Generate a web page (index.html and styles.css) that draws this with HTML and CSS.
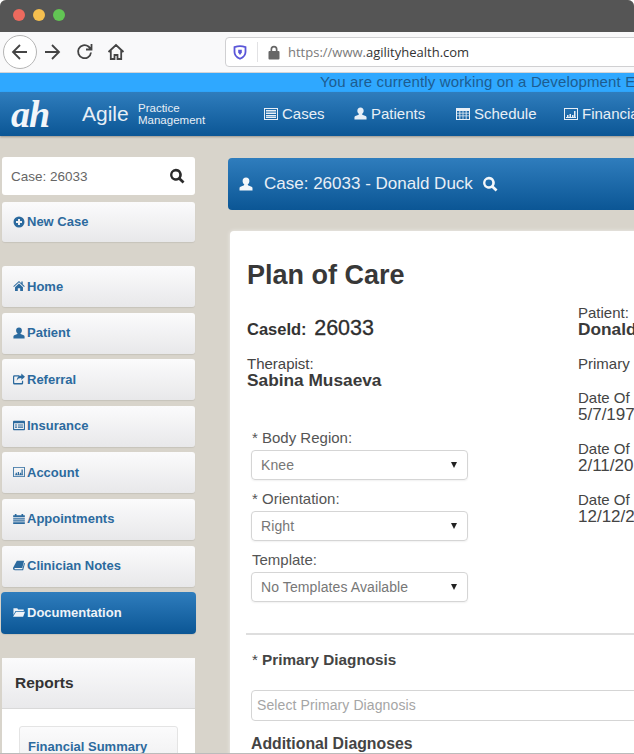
FILE: index.html
```html
<!DOCTYPE html>
<html lang="en">
<head>
    <meta charset="UTF-8">
    <title>Plan of Care</title>
    <link rel="stylesheet" href="styles.css">
</head>
<body>
<svg class="defs" width="0" height="0">
    <symbol id="i-user" viewBox="0 0 14 14"><path d="M7 .6c-2.200 0-3.400 1.500-3.400 3.500 0 1.400.6 2.600 1.600 3.200L5.100 8.300 1.500 9.700C.9 10 .5 10.500.5 11.100V13.400h13v-2.300c0-.6-.4-1.100-1-1.400L8.900 8.300 8.800 7.300c1-.6 1.600-1.800 1.600-3.200C10.400 2.100 9.200.6 7 .6z"/></symbol>
    <symbol id="i-search" viewBox="0 0 16 16"><path fill-rule="evenodd" d="M6.800 .8a6 6 0 0 1 5 9.300l3.700 3.300-1.900 2.100-3.700-3.400A6 6 0 1 1 6.800 .8zm0 2.600a3.400 3.400 0 1 0 0 6.800 3.400 3.400 0 0 0 0-6.800z"/></symbol>
    <symbol id="i-list" viewBox="0 0 14 12"><path fill-rule="evenodd" d="M0 0h14v12H0zm1 1v10h12V1zm1 1h10v1.500H2zm0 2.500h10V6H2zM2 7h10v1.500H2zm0 2h10v1H2z"/></symbol>
    <symbol id="i-calendar" viewBox="0 0 14 12"><path fill-rule="evenodd" d="M0 0h14v12H0zm1 3v1.800h2.400V3zm3.300 0v1.800h2.300V3zm3.100 0v1.800h2.300V3zm3.200 0v1.800H13V3zM1 5.600v1.900h2.400V5.600zm3.300 0v1.900h2.300V5.600zm3.100 0v1.900h2.300V5.600zm3.200 0v1.900H13V5.600zM1 8.300V11h2.400V8.300zm3.300 0V11h2.300V8.300zm3.100 0V11h2.300V8.300zm3.200 0V11H13V8.300z"/></symbol>
    <symbol id="i-chart" viewBox="0 0 14 12"><path fill-rule="evenodd" d="M0 0h14v12H0zm1 1v10h12V1zm1 8h10v1H2zm1-2h1.500v2H3zm2.500-1H7v3H5.500zM8 7h1.500v2H8zm2-4h1.500v6H10z"/></symbol>
    <symbol id="i-plus" viewBox="0 0 12 12"><path fill-rule="evenodd" d="M6 .5a5.500 5.500 0 1 1 0 11 5.500 5.500 0 0 1 0-11zM5 3v2H3v2h2v2h2V7h2V5H7V3z"/></symbol>
    <symbol id="i-home" viewBox="0 0 13 12"><path d="M6.500 .5.300 6.200l.7.800 5.500-5 5.500 5 .7-.8-2.200-2V1.200H9v1.700zM2.200 7.300V11.500h3V8.500h2.600v3h3V7.300L6.500 3.400z"/></symbol>
    <symbol id="i-share" viewBox="0 0 13 12"><path d="M1.500 2H7v1.300H1.800a.5.500 0 0 0-.5.500v6a.5.500 0 0 0 .5.500h7.400a.5.500 0 0 0 .5-.5V8H11v2.500A1.500 1.500 0 0 1 9.500 12h-8A1.500 1.500 0 0 1 0 10.500v-7A1.500 1.500 0 0 1 1.500 2zM9 0l4 3.500L9 7V5C6.800 5 5 5.800 4 8c0-3.200 2-5.500 5-5.700z"/></symbol>
    <symbol id="i-card" viewBox="0 0 14 12"><path fill-rule="evenodd" d="M1 .5h12a1 1 0 0 1 1 1v9a1 1 0 0 1-1 1H1a1 1 0 0 1-1-1v-9a1 1 0 0 1 1-1zm.3 3v6.700h11.400V3.500zM2.300 4.800h2.400V6H2.300zm3.400 0h6V6h-6zM2.300 7.300h2.400v1.200H2.300zm3.400 0h6v1.200h-6z"/></symbol>
    <symbol id="i-appt" viewBox="0 0 14 12"><path d="M2 0h2v1.500h6V0h2v1.500h2V4H0V1.500h2zM0 5h14v1.500H0zm0 2.500h14V9H0zM0 10h14v2H0z"/></symbol>
    <symbol id="i-book" viewBox="0 0 14 12"><path d="M4.500 .5H13L10.800 9H2.500c-.6 0-.9.300-.9.700s.3.800.9.800h8.300L13 3l1 .5-2.200 8H2.200C1 11.500 0 10.700 0 9.500c0-.3 0-.6.100-.9z"/></symbol>
    <symbol id="i-folder" viewBox="0 0 14 12"><path d="M.5 1H5l1 1.500h6.500v1.700H3L.5 9zM3.600 5H14l-2.200 6H0z"/></symbol>
</svg>

<div class="frame">
    <div class="titlebar">
        <span class="dot dot-red"></span>
        <span class="dot dot-yellow"></span>
        <span class="dot dot-green"></span>
    </div>

    <div class="toolbar">
        <span class="back-btn">
            <svg width="20" height="20" viewBox="0 0 20 20" class="tool-icon"><path d="M17 10H3M10 3l-7 7 7 7"/></svg>
        </span>
        <svg width="20" height="20" viewBox="0 0 20 20" class="tool-icon forward"><path d="M3 10h14M10 3l7 7-7 7"/></svg>
        <svg width="20" height="20" viewBox="0 0 20 20" class="tool-icon reload"><path d="M16 10.500A6.500 6.500 0 1 1 13.500 4.500L16 7M16.500 2v5.500H11"/></svg>
        <svg width="20" height="20" viewBox="0 0 20 20" class="tool-icon home"><path d="M2.500 10 10 3l7.500 7M4.800 8.500V17h3.700v-4h3v4h3.700V8.500"/></svg>
        <div class="urlbar">
            <svg class="shield" width="14" height="15" viewBox="0 0 14 15"><path d="M1.500 2.200C3.500 1.500 5 1.200 7 1.200s3.500.3 5.500 1V7c0 3.200-2.300 5.400-5.500 6.800C3.800 12.400 1.500 10.200 1.500 7z"/><path class="shield-in" d="M5.200 4.800h3.600v2.600L7 10 5.200 7.400z"/></svg>
            <span class="url-sep"></span>
            <svg class="lock" width="12" height="15" viewBox="0 0 12 15"><path d="M2.500 6V4.200a3.500 3.500 0 0 1 7 0V6h1a1 1 0 0 1 1 1v6.500a1 1 0 0 1-1 1h-9a1 1 0 0 1-1-1V7a1 1 0 0 1 1-1zm1.700 0h3.600V4.200a1.800 1.800 0 0 0-3.600 0z"/></svg>
            <span class="url"><span class="url-dim">https://www.</span>agilityhealth.com</span>
        </div>
    </div>

    <div class="dev-banner">You are currently working on a Development Environment</div>

    <nav class="topnav">
        <span class="logo">ah</span>
        <span class="brand">Agile</span>
        <span class="brand-sub">Practice<br>Management</span>
        <a class="nav-item nav-cases"><svg width="14" height="12"><use href="#i-list"/></svg>Cases</a>
        <a class="nav-item nav-patients"><svg width="13" height="13"><use href="#i-user"/></svg>Patients</a>
        <a class="nav-item nav-schedule"><svg width="14" height="12"><use href="#i-calendar"/></svg>Schedule</a>
        <a class="nav-item"><svg width="14" height="12"><use href="#i-chart"/></svg>Financial</a>
    </nav>

    <div class="layout">
        <aside class="sidebar">
            <div class="case-search">
                <span>Case: 26033</span>
                <svg width="16" height="16"><use href="#i-search"/></svg>
            </div>
            <a class="side-btn new-case"><svg width="12" height="12"><use href="#i-plus"/></svg>New Case</a>

            <div class="side-group">
                <a class="side-btn"><svg width="12" height="12"><use href="#i-home"/></svg>Home</a>
                <a class="side-btn"><svg width="12" height="12"><use href="#i-user"/></svg>Patient</a>
                <a class="side-btn"><svg width="12" height="12"><use href="#i-share"/></svg>Referral</a>
                <a class="side-btn"><svg width="12" height="11"><use href="#i-card"/></svg>Insurance</a>
                <a class="side-btn"><svg width="12" height="10"><use href="#i-chart"/></svg>Account</a>
                <a class="side-btn"><svg width="12" height="10"><use href="#i-appt"/></svg>Appointments</a>
                <a class="side-btn"><svg width="12" height="11"><use href="#i-book"/></svg>Clinician Notes</a>
                <a class="side-btn active"><svg width="12" height="11"><use href="#i-folder"/></svg>Documentation</a>
            </div>

            <div class="reports">
                <div class="reports-title">Reports</div>
                <div class="reports-body">
                    <a class="report-link">Financial Summary</a>
                </div>
            </div>
        </aside>

        <main class="main">
            <header class="case-header">
                <svg width="14" height="14"><use href="#i-user"/></svg>
                <span>Case: 26033 - Donald Duck</span>
                <svg class="case-search-ic" width="16" height="16"><use href="#i-search"/></svg>
            </header>

            <section class="card">
                <h1>Plan of Care</h1>
                <div class="columns">
                    <div class="col-left">
                        <div class="case-id"><b>CaseId:</b> <span>26033</span></div>
                        <div class="field therapist">Therapist:<br><b>Sabina Musaeva</b></div>

                        <label class="select-label">* Body Region:</label>
                        <div class="select"><span>Knee</span><i class="caret"></i></div>
                        <label class="select-label">* Orientation:</label>
                        <div class="select"><span>Right</span><i class="caret"></i></div>
                        <label class="select-label">Template:</label>
                        <div class="select"><span>No Templates Available</span><i class="caret"></i></div>
                    </div>
                    <div class="col-right">
                        <div class="field">Patient:<br><b>Donald Duck</b></div>
                        <div class="field">Primary Insurance:</div>
                        <div class="field">Date Of Birth:<br><span class="date">5/7/1975</span></div>
                        <div class="field">Date Of Injury:<br><span class="date">2/11/2019</span></div>
                        <div class="field">Date Of Surgery:<br><span class="date">12/12/2019</span></div>
                    </div>
                </div>

                <hr class="divider">

                <div class="diag-title">* <b>Primary Diagnosis</b></div>
                <div class="diag-input">Select Primary Diagnosis</div>
                <div class="diag-extra">Additional Diagnoses</div>
            </section>
        </main>
    </div>
</div>
</body>
</html>
```

FILE: styles.css
```css
html, body {
  margin: 0;
  height: 100%;
  overflow: hidden;
}
body {
  font-family: "Liberation Sans", Arial, sans-serif;
  background: #fff;
}
.defs {
  position: absolute;
}
a {
  text-decoration: none;
}

.frame {
  width: 634px;
  height: 753px;
  overflow: hidden;
  background: #d8d4cb;
  border-bottom: 1px solid #bbb;
  border-radius: 6px 6px 0 0;
}

/* browser window */
.titlebar {
  height: 30px;
  padding: 0 0 2px 13px;
  background: #555555;
  display: flex;
  align-items: center;
  gap: 8px;
}
.dot {
  width: 12px;
  height: 12px;
  border-radius: 50%;
}
.dot-red { background: #ed6a5e; }
.dot-yellow { background: #f5bf4f; }
.dot-green { background: #62c554; }

.toolbar {
  height: 40px;
  background: #f9f9fa;
  border-bottom: 1px solid #d4d4d6;
  display: flex;
  align-items: center;
  padding-left: 3px;
}
.back-btn {
  width: 32px;
  height: 32px;
  border: 1px solid #b5b5b5;
  border-radius: 50%;
  background: #fff;
  display: flex;
  align-items: center;
  justify-content: center;
  flex-shrink: 0;
}
.tool-icon {
  fill: none;
  stroke: #444;
  stroke-width: 1.800;
  flex-shrink: 0;
}
.forward { margin-left: 5px; }
.reload { margin-left: 13px; }
.home { margin-left: 11px; }
.urlbar {
  margin-left: 99px;
  width: 420px;
  height: 28px;
  flex-shrink: 0;
  background: #fff;
  border: 1px solid #d0d0d2;
  border-radius: 4px;
  display: flex;
  align-items: center;
  padding-left: 7px;
  font-family: "Open Sans", sans-serif;
  font-size: 13px;
  color: #333;
}
.shield {
  fill: #fff;
  stroke: #5a56d8;
  stroke-width: 1.800;
}
.shield-in {
  fill: #5a56d8;
  stroke: none;
}
.url-sep {
  width: 1px;
  height: 20px;
  background: #e2e2e4;
  margin: 0 10px 0 10px;
}
.lock {
  fill: #666;
  margin-right: 8px;
}
.url-dim {
  color: #7a7a7a;
}

.dev-banner {
  height: 19px;
  line-height: 18px;
  background: #2fa8ff;
  color: #1d5c90;
  font-size: 15px;
  letter-spacing: 0.15px;
  padding-left: 320px;
  white-space: nowrap;
}

.topnav {
  height: 44px;
  padding-bottom: 1px;
  box-sizing: border-box;
  background: linear-gradient(#2f7dbd, #0b5695);
  box-shadow: 0 1px 2px rgba(0, 0, 0, 0.3);
  color: #e8eff6;
  display: flex;
  align-items: center;
  white-space: nowrap;
}
.topnav > * {
  flex-shrink: 0;
}
.logo {
  font-family: "Liberation Serif", serif;
  font-style: italic;
  font-weight: bold;
  font-size: 38px;
  line-height: 30px;
  letter-spacing: -1px;
  color: #f2f6fa;
  margin-left: 11px;
  width: 71px;
}
.brand {
  font-size: 21px;
  width: 56px;
}
.brand-sub {
  font-size: 11.500px;
  line-height: 12px;
  width: 70px;
}
.nav-item {
  display: flex;
  align-items: center;
  gap: 4px;
  font-size: 15px;
  color: #e8eff6;
}
.nav-item svg {
  fill: #e8eff6;
}
.nav-cases { margin-left: 56px; width: 90px; }
.nav-patients { width: 102px; }
.nav-schedule { width: 108px; }

/* page */
.layout {
  display: flex;
  align-items: flex-start;
  padding: 21px 0 0 2px;
}
.sidebar {
  width: 193px;
  flex-shrink: 0;
}
.case-search {
  height: 38px;
  background: #fff;
  border-radius: 3px;
  display: flex;
  align-items: center;
  justify-content: space-between;
  padding: 0 10px 0 9px;
  font-size: 13.500px;
  color: #666;
}
.case-search svg {
  fill: #2b2b2b;
}
.side-btn {
  display: flex;
  align-items: center;
  gap: 2px;
  height: 41px;
  padding: 0 0 1px 11px;
  box-sizing: border-box;
  background: linear-gradient(#fbfbfc, #e8e8ea);
  border-radius: 3px;
  box-shadow: 0 1px 1px rgba(0, 0, 0, 0.08);
  font-size: 13px;
  font-weight: bold;
  color: #2c6a9e;
}
.side-btn svg {
  fill: #2c6a9e;
  flex-shrink: 0;
}
.new-case {
  height: 40px;
  margin-top: 7px;
}
.side-group {
  margin-top: 24px;
}
.side-group .side-btn {
  margin-top: 5.600px;
}
.side-group .side-btn:first-child {
  margin-top: 0;
}
.side-btn.active {
  background: linear-gradient(#2f7dbd, #0b5695);
  color: #eef3f8;
  margin-left: -1px;
  width: 195px;
  height: 42px;
  padding-left: 12px;
  padding-bottom: 2px;
  border-radius: 4px;
}
.side-btn.active svg {
  fill: #eef3f8;
}
.reports {
  margin-top: 24px;
  background: #fff;
  border-radius: 3px 3px 0 0;
}
.reports-title {
  height: 50px;
  line-height: 50px;
  padding-left: 13px;
  background: linear-gradient(#fbfbfc, #e9e9eb);
  border-bottom: 1px solid #d9d9d9;
  font-size: 15.500px;
  font-weight: bold;
  color: #333;
}
.reports-body {
  padding: 17px 17px 10px;
}
.report-link {
  display: block;
  height: 40px;
  line-height: 40px;
  padding-left: 8px;
  background: linear-gradient(#fbfbfc, #efeff0);
  border: 1px solid #e4e4e4;
  border-radius: 3px;
  font-size: 13px;
  font-weight: bold;
  color: #2c6a9e;
}

.main {
  margin: 1px 0 0 33px;
  width: 500px;
  flex-shrink: 0;
}
.case-header {
  height: 52px;
  background: linear-gradient(#2f7dbd, #0b5695);
  border-radius: 4px;
  color: #e8eff6;
  display: flex;
  align-items: center;
  padding-left: 11px;
  box-sizing: border-box;
  font-size: 17px;
  white-space: nowrap;
}
.case-header svg {
  fill: #f4f7fa;
}
.case-header span {
  margin-left: 11px;
}
.case-search-ic {
  margin-left: 9px;
}
.card {
  margin: 21px 0 0 2px;
  background: #fff;
  border-radius: 4px;
  box-shadow: 0 0 4px rgba(255, 255, 255, 0.6);
  padding: 29px 0 0 17px;
  height: 520px;
  font-size: 15px;
  color: #444;
}
h1 {
  margin: 0;
  font-size: 27px;
  line-height: 30px;
  font-weight: bold;
  color: #383838;
}
.columns {
  display: flex;
  white-space: nowrap;
}
.col-left {
  width: 331px;
  flex-shrink: 0;
  padding-top: 26px;
}
.col-right {
  padding-top: 14px;
}
.case-id {
  font-size: 16.500px;
  line-height: 24px;
  color: #333;
}
.case-id span {
  font-size: 21.500px;
  margin-left: 3px;
  color: #2e2e2e;
  -webkit-text-stroke: 0.3px #2e2e2e;
}
.field {
  line-height: 17px;
  margin-bottom: 17px;
}
.field b {
  color: #3a3a3a;
  font-size: 17.300px;
}
.date {
  font-size: 17px;
}
.therapist {
  margin-top: 14px;
  margin-bottom: 41px;
}
.select-label {
  display: block;
  margin-left: 5px;
  line-height: 16px;
  margin-bottom: 4px;
  color: #555;
}
.select {
  margin: 0 0 11px 4px;
  width: 217px;
  height: 30px;
  box-sizing: border-box;
  border: 1px solid #d5d5d5;
  border-radius: 4px;
  box-shadow: 0 1px 2px rgba(0, 0, 0, 0.06);
  padding: 0 10px 0 9px;
  display: flex;
  align-items: center;
  justify-content: space-between;
  font-size: 14px;
  letter-spacing: 0.1px;
  color: #777;
}
.caret {
  border-left: 3.500px solid transparent;
  border-right: 3.500px solid transparent;
  border-top: 6px solid #222;
}
.divider {
  margin: 20px 0 0 -1px;
  border: 0;
  border-top: 2px solid #dedede;
}
.diag-title {
  margin: 16px 0 0 5px;
  line-height: 18px;
  color: #444;
}
.diag-title b {
  font-size: 15.300px;
}
.diag-input {
  margin: 21px 0 0 4px;
  width: 500px;
  height: 31px;
  line-height: 29px;
  box-sizing: border-box;
  border: 1px solid #d5d5d5;
  border-radius: 4px;
  padding-left: 5px;
  font-size: 14px;
  letter-spacing: 0.1px;
  color: #a5a5a5;
}
.diag-extra {
  margin: 14px 0 0 4px;
  font-size: 15.800px;
  font-weight: bold;
  line-height: 18px;
  color: #444;
}
```
